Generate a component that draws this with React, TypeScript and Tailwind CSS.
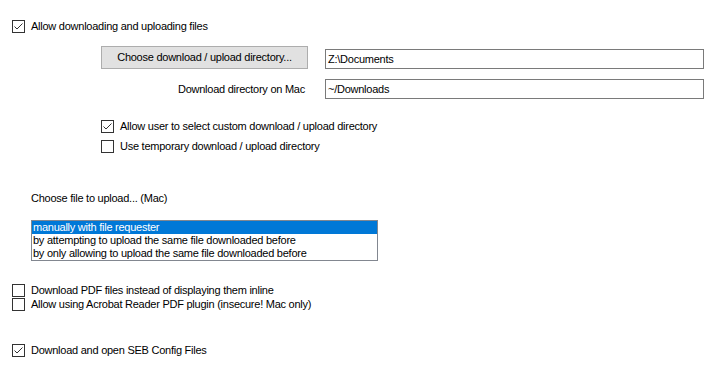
import React from "react";

function CheckBox({ checked, label, className = "" }: { checked?: boolean; label: string; className?: string }) {
  return (
    <div className={`flex items-center h-[13px] ${className}`}>
      <div className="w-[13px] h-[13px] border border-[#333333] bg-white flex-none">
        {checked && (
          <svg width="11" height="11" viewBox="0 0 11 11" className="block">
            <path d="M1.5 5.5 L4 8 L9.5 2.5" fill="none" stroke="#333333" strokeWidth="1" />
          </svg>
        )}
      </div>
      <span className="ml-[6px] whitespace-nowrap">{label}</span>
    </div>
  );
}

export default function App() {
  const uploadOptions = [
    "manually with file requester",
    "by attempting to upload the same file downloaded before",
    "by only allowing to upload the same file downloaded before",
  ];

  return (
    <div
      className="w-[718px] h-[366px] bg-white text-[11px] leading-[13px] tracking-[-0.25px] text-black overflow-hidden flex flex-col"
      style={{ fontFamily: '"Liberation Sans", Arial, sans-serif' }}
    >
      {/* DOWNLOAD / UPLOAD */}
      <CheckBox checked label="Allow downloading and uploading files" className="mt-[20px] ml-[12px]" />

      <div className="grid grid-cols-[207px_379px] gap-x-[17px] ml-[101px] mt-[13px]">
        <div className="h-[23px] border border-[#adadad] bg-[#e1e1e1] flex items-center justify-center">
          Choose download / upload directory...
        </div>
        <div className="self-end h-[20px] border border-[#7a7a7a] bg-white flex items-center px-[2px]">
          Z:\Documents
        </div>
        <div className="mt-[10px] h-[20px] flex items-center justify-end pr-[3px]">
          Download directory on Mac
        </div>
        <div className="mt-[10px] h-[20px] border border-[#7a7a7a] bg-white flex items-center px-[2px]">
          ~/Downloads
        </div>
      </div>

      <CheckBox checked label="Allow user to select custom download / upload directory" className="mt-[21px] ml-[101px]" />
      <CheckBox label="Use temporary download / upload directory" className="mt-[7px] ml-[101px]" />

      {/* FILE UPLOAD (MAC) */}
      <div className="mt-[39px] ml-[31px]">Choose file to upload... (Mac)</div>
      <div className="mt-[15px] ml-[31px] w-[347px] h-[41px] border border-[#828790] bg-white">
        {uploadOptions.map((opt, i) => (
          <div
            key={opt}
            className={`h-[13px] px-[1px] whitespace-nowrap ${i === 0 ? "bg-[#0078d7] text-white" : ""}`}
          >
            {opt}
          </div>
        ))}
      </div>

      {/* PDF */}
      <CheckBox label="Download PDF files instead of displaying them inline" className="mt-[23px] ml-[12px]" />
      <CheckBox label="Allow using Acrobat Reader PDF plugin (insecure! Mac only)" className="mt-[1px] ml-[12px]" />

      <CheckBox checked label="Download and open SEB Config Files" className="mt-[33px] ml-[12px]" />
    </div>
  );
}
